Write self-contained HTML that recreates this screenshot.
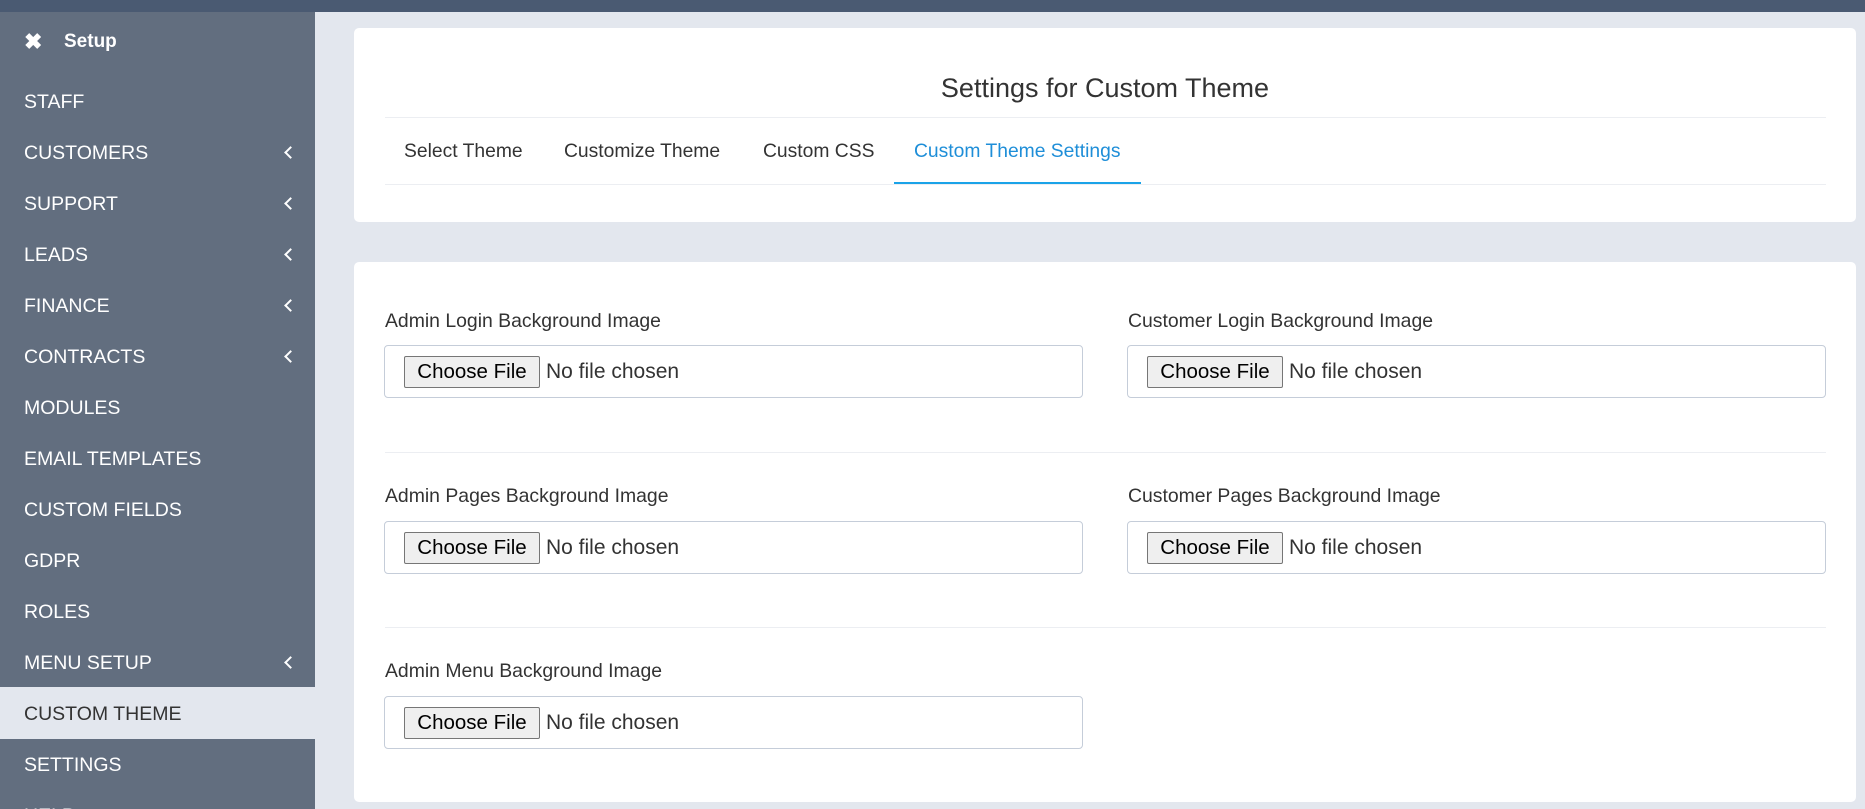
<!DOCTYPE html>
<html><head><meta charset="utf-8"><style>
*{margin:0;padding:0;box-sizing:border-box}
html{width:1865px;height:809px;overflow:hidden}
body{width:1865px;height:809px;overflow:hidden;background:#e3e7ee;font-family:"Liberation Sans",Arial,sans-serif;position:relative}
.top{position:absolute;left:0;top:0;width:1865px;height:12px;background:#4a5a72}
.side{position:absolute;left:0;top:12px;width:315px;height:797px;background:#626e7f;overflow:hidden}
.it{position:absolute;left:24px;color:#fff;font-size:19.5px;line-height:24px}
.chev{position:absolute;left:286px;width:9px;height:9px;border-left:2px solid #fff;border-bottom:2px solid #fff;transform:rotate(45deg)}
.act{position:absolute;left:0;top:675px;width:315px;height:52px;background:#e3e7ee}
.card{position:absolute;background:#fff;border-radius:5px;left:354px;width:1502px}
.hl{position:absolute;left:385px;width:1441px;height:1px;background:#eceef2}
.tab{position:absolute;top:140px;font-size:19.3px;color:#333;line-height:24px}
.lbl{position:absolute;font-size:19.4px;color:#333;line-height:24px}
.inp{position:absolute;height:53px;border:1px solid #c5cdd9;border-radius:4px;background:#fff}
.btn{position:absolute;left:19px;top:10px;width:136px;height:32px;border:1px solid #767676;background:#efefef;border-radius:2px;font-size:20.5px;color:#000;text-align:center;line-height:30px}
.nf{position:absolute;left:161px;top:11px;font-size:21px;color:#333;line-height:30px}
</style></head><body>
<div class="top"></div>
<div class="side">
<div class="act"></div>
<div class="it" style="top:18px;font-weight:bold;font-size:22px">✖</div>
<div class="it" style="top:18px;left:64px;font-weight:bold;font-size:19px">Setup</div>
<div class="it" style="top:78px">STAFF</div>
<div class="it" style="top:129px">CUSTOMERS</div><div class="chev" style="top:136px"></div>
<div class="it" style="top:180px">SUPPORT</div><div class="chev" style="top:187px"></div>
<div class="it" style="top:231px">LEADS</div><div class="chev" style="top:238px"></div>
<div class="it" style="top:282px">FINANCE</div><div class="chev" style="top:289px"></div>
<div class="it" style="top:333px">CONTRACTS</div><div class="chev" style="top:340px"></div>
<div class="it" style="top:384px">MODULES</div>
<div class="it" style="top:435px">EMAIL TEMPLATES</div>
<div class="it" style="top:486px">CUSTOM FIELDS</div>
<div class="it" style="top:537px">GDPR</div>
<div class="it" style="top:588px">ROLES</div>
<div class="it" style="top:639px">MENU SETUP</div><div class="chev" style="top:646px"></div>
<div class="it" style="top:690px;color:#333">CUSTOM THEME</div>
<div class="it" style="top:741px">SETTINGS</div>
<div class="it" style="top:792px">HELP</div>
</div>

<div class="card" style="top:28px;height:194px"></div>
<div style="position:absolute;left:354px;width:1502px;top:72px;text-align:center;font-size:27px;color:#333;line-height:32px">Settings for Custom Theme</div>
<div class="hl" style="top:117px"></div>
<div class="hl" style="top:184px"></div>
<div class="tab" style="left:404px">Select Theme</div>
<div class="tab" style="left:564px">Customize Theme</div>
<div class="tab" style="left:763px">Custom CSS</div>
<div class="tab" style="left:914px;color:#1e8ed8">Custom Theme Settings</div>
<div style="position:absolute;left:894px;top:182px;width:247px;height:2px;background:#1aa3e8"></div>

<div class="card" style="top:262px;height:540px"></div>
<div class="hl" style="top:452px"></div>
<div class="hl" style="top:627px"></div>

<div class="lbl" style="left:385px;top:309px">Admin Login Background Image</div>
<div class="inp" style="left:384px;top:345px;width:699px"><div class="btn">Choose File</div><div class="nf">No file chosen</div></div>
<div class="lbl" style="left:1128px;top:309px">Customer Login Background Image</div>
<div class="inp" style="left:1127px;top:345px;width:699px"><div class="btn">Choose File</div><div class="nf">No file chosen</div></div>

<div class="lbl" style="left:385px;top:484px">Admin Pages Background Image</div>
<div class="inp" style="left:384px;top:521px;width:699px"><div class="btn">Choose File</div><div class="nf">No file chosen</div></div>
<div class="lbl" style="left:1128px;top:484px">Customer Pages Background Image</div>
<div class="inp" style="left:1127px;top:521px;width:699px"><div class="btn">Choose File</div><div class="nf">No file chosen</div></div>

<div class="lbl" style="left:385px;top:659px">Admin Menu Background Image</div>
<div class="inp" style="left:384px;top:696px;width:699px"><div class="btn">Choose File</div><div class="nf">No file chosen</div></div>
</body></html>
